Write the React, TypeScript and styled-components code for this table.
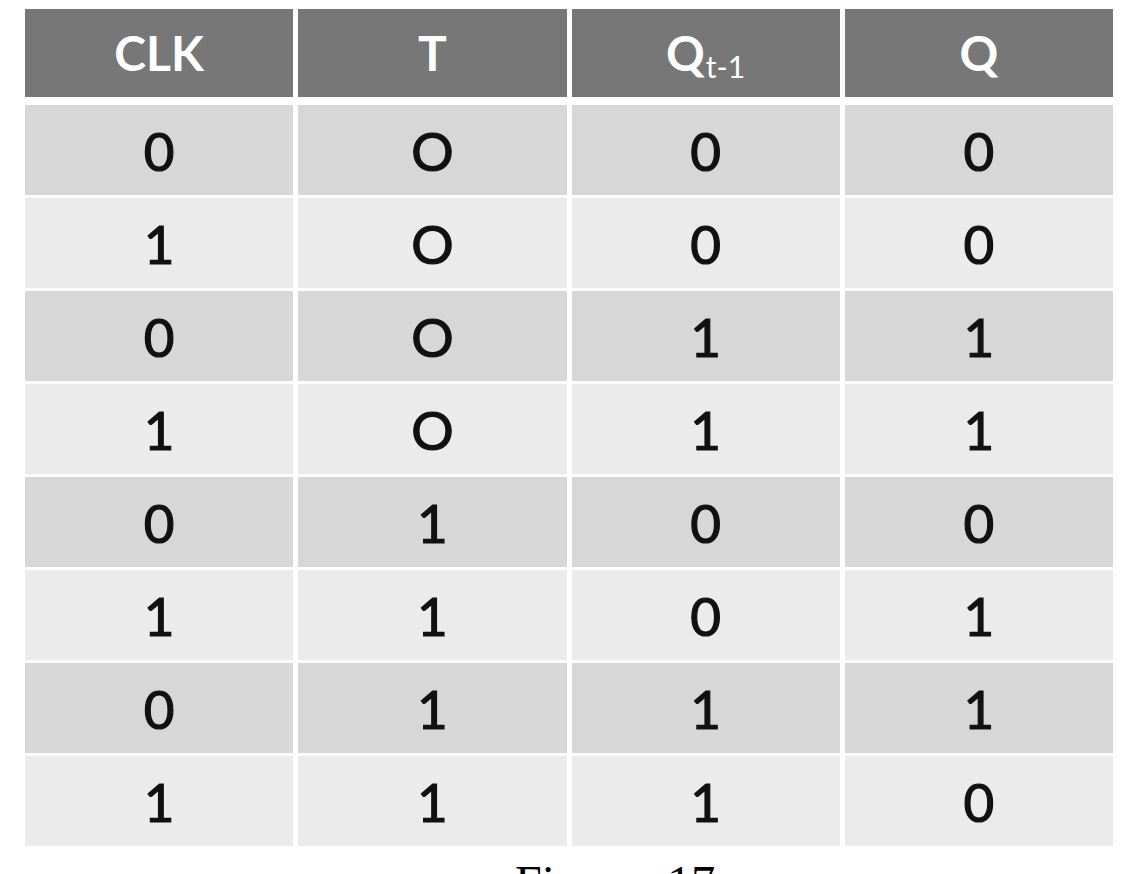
import React from "react";
import styled, { createGlobalStyle } from "styled-components";

const GlobalStyle = createGlobalStyle`
  html, body {
    margin: 0;
    padding: 0;
    background: #ffffff;
    overflow: hidden;
  }
`;

const rows: string[][] = [
  ["0", "O", "0", "0"],
  ["1", "O", "0", "0"],
  ["0", "O", "1", "1"],
  ["1", "O", "1", "1"],
  ["0", "1", "0", "0"],
  ["1", "1", "0", "1"],
  ["0", "1", "1", "1"],
  ["1", "1", "1", "0"],
];

const App = () => {
  return (
    <Page>
      <GlobalStyle />
      <Table>
        <HeaderRow>
          <HeaderCell>CLK</HeaderCell>
          <HeaderCell>T</HeaderCell>
          <HeaderCell>
            Q<Sub>t-1</Sub>
          </HeaderCell>
          <HeaderCell>Q</HeaderCell>
        </HeaderRow>
        <Body>
          {rows.map((row, i) =>
            row.map((value, j) => (
              <Cell key={`${i}-${j}`} $dark={i % 2 === 0}>
                {value}
              </Cell>
            ))
          )}
        </Body>
      </Table>
      <Caption>Figure 17</Caption>
    </Page>
  );
};

const Page = styled.div`
  padding: 9px 0 0 25px;
  width: 1088px;
`;

const Table = styled.div`
  display: flex;
  flex-direction: column;
  gap: 8px;
`;

const HeaderRow = styled.div`
  display: grid;
  grid-template-columns: repeat(4, 1fr);
  column-gap: 5px;
  height: 88px;
`;

const HeaderCell = styled.div`
  background: #777777;
  color: #ffffff;
  font-family: Lato, "Liberation Sans", sans-serif;
  font-weight: 700;
  font-size: 48px;
  display: flex;
  align-items: center;
  justify-content: center;
  padding-bottom: 2px;
`;

const Sub = styled.span`
  font-size: 30px;
  font-weight: 400;
  line-height: 0;
  position: relative;
  top: 0.45em;
  margin-left: 1px;
`;

const Body = styled.div`
  display: grid;
  grid-template-columns: repeat(4, 1fr);
  grid-auto-rows: 90px;
  column-gap: 5px;
  row-gap: 3px;
`;

const Cell = styled.div<{ $dark: boolean }>`
  background: ${(p) => (p.$dark ? "#d7d7d7" : "#ebebeb")};
  color: #111111;
  font-family: Lato, "Liberation Sans", sans-serif;
  font-weight: 400;
  font-size: 53px;
  -webkit-text-stroke: 1.2px #111111;
  display: flex;
  align-items: center;
  justify-content: center;
`;

const Caption = styled.div`
  font-family: "Liberation Serif", "Times New Roman", serif;
  font-size: 48px;
  color: #000000;
  margin-top: 9px;
  padding-left: 490px;
  word-spacing: 15px;
`;

export default App;
